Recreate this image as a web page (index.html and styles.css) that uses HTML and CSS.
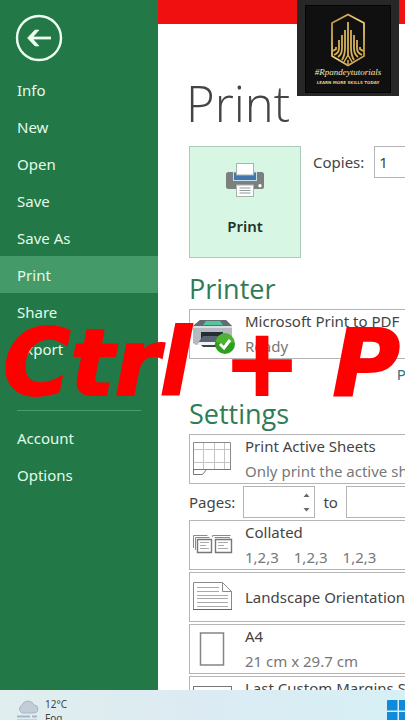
FILE: index.html
```html
<!DOCTYPE html>
<html lang="en">
<head>
    <meta charset="UTF-8">
    <meta name="viewport" content="width=device-width, initial-scale=1.0">
    <title>Print</title>
    <link rel="stylesheet" href="styles.css">
</head>
<body>
    <div class="backstage">
        <nav class="sidebar">
            <button class="back" aria-label="Back">
                <svg width="48" height="48" viewBox="0 0 48 48" fill="none" stroke="#eefff2">
                    <circle cx="24" cy="24" r="22" stroke-width="2.400"/>
                    <path d="M36 24H15" stroke-width="2.800"/>
                    <path d="M24 16h-4l-7.500 8 7.500 8h4l-7-8z" fill="#eefff2" stroke-width="0.600"/>
                </svg>
            </button>
            <a class="nav-item" href="#">Info</a>
            <a class="nav-item" href="#">New</a>
            <a class="nav-item" href="#">Open</a>
            <a class="nav-item" href="#">Save</a>
            <a class="nav-item" href="#">Save As</a>
            <a class="nav-item active" href="#">Print</a>
            <a class="nav-item" href="#">Share</a>
            <a class="nav-item" href="#">Export</a>
            <a class="nav-item" href="#">Close</a>
            <hr class="divider">
            <a class="nav-item" href="#">Account</a>
            <a class="nav-item" href="#">Options</a>
        </nav>

        <main class="content">
            <div class="title-bar"></div>
            <div class="panel">
                <h1>Print</h1>
                <div class="print-row">
                    <button class="print-btn">
                        <svg width="38" height="34" viewBox="0 0 38 34">
                            <rect x="0" y="9" width="38" height="17" rx="2.500" fill="#7b7f7d"/>
                            <rect x="7.500" y="9" width="23" height="8.500" fill="#4476ae" stroke="#c5e3ee"/>
                            <rect x="10.500" y="0.500" width="17" height="11.500" fill="#fff" stroke="#a5b4ac"/>
                            <rect x="10.500" y="22" width="17" height="11.500" fill="#fff" stroke="#a5b4ac"/>
                            <path d="M13.500 25h11M13.500 27.500h11M13.500 30h11" stroke="#8d9a9d"/>
                            <circle cx="34" cy="22.800" r="1.700" fill="#fff"/>
                        </svg>
                        <span>Print</span>
                    </button>
                    <label for="copies">Copies:</label>
                    <input class="copies" type="text" id="copies" value="1">
                </div>

                <h2>Printer</h2>
                <button class="option">
                    <svg class="option-icon" width="44" height="40" viewBox="0 0 44 40">
                        <path d="M9 6h26l6 6v17l-3 2H5l-3-2V12z" fill="#b4babf"/>
                        <path d="M9 6h26l6 6H2z" fill="#656b72"/>
                        <path d="M15 7h14l3 4H12z" fill="#51c79d"/>
                        <path d="M2 12h39v2H2z" fill="#d9dee1"/>
                        <path d="M10 18h22v10H10z" fill="#262d35"/>
                        <path d="M12 22h18v7H7z" fill="#596472"/>
                        <path d="M8 28h17l-2 3H6z" fill="#eff3f5"/>
                        <path d="M10 31h15v2H12z" fill="#3c4246"/>
                        <circle cx="34" cy="30" r="10" fill="#2f9f20"/>
                        <path d="M25 28a9 9 0 0 1 18 0q-9 4-18 0z" fill="#4fb233"/>
                        <path d="M29 30l4 4 6-8" fill="none" stroke="#fff" stroke-width="3"/>
                    </svg>
                    <span class="option-text">Microsoft Print to PDF<small>Ready</small></span>
                </button>
                <a class="properties" href="#">Printer Properties</a>

                <h2>Settings</h2>
                <div class="settings">
                    <button class="option">
                        <svg class="option-icon" width="44" height="40" viewBox="0 0 44 40" fill="none">
                            <path d="M2.500 3.500h37v27h-37z" stroke="#8a8a8a"/>
                            <path d="M12.500 4v26M23.500 4v26M33.500 4v26M3 10.500h36M3 23.500h36" stroke="#c4c4c4"/>
                            <path d="M2 30.500h38M2.500 30v5.500h9l4-5" stroke="#777"/>
                        </svg>
                        <span class="option-text">Print Active Sheets<small>Only print the active sheets</small></span>
                    </button>
                    <div class="pages">
                        <label for="from">Pages:</label>
                        <div class="spinner">
                            <input type="text" id="from">
                            <svg width="7" height="19" viewBox="0 0 7 19" fill="#666">
                                <path d="M0.500 4l3-3.500 3 3.500zM0.500 15l3 3.500 3-3.500z"/>
                            </svg>
                        </div>
                        <label for="to">to</label>
                        <div class="spinner">
                            <input type="text" id="to">
                            <svg width="7" height="19" viewBox="0 0 7 19" fill="#666">
                                <path d="M0.500 4l3-3.500 3 3.500zM0.500 15l3 3.500 3-3.500z"/>
                            </svg>
                        </div>
                    </div>
                    <button class="option">
                        <svg class="option-icon" width="44" height="40" viewBox="0 0 44 40" fill="none" stroke="#8a8a8a">
                            <path d="M2.500 23V10.500h14M4.500 25V12.500h14M21.500 12v-1.500h18M23.500 12.500h15v1"/>
                            <path d="M6.500 14.500h14v13h-14zM24.500 14.500h16v13h-16z" stroke="#777" stroke-width="1.400"/>
                            <path d="M9 17.500h9M9 20.500h6M9 23.500h9M27 17.500h10M27 20.500h6M27 23.500h10" stroke="#aaa"/>
                        </svg>
                        <span class="option-text">Collated<small class="sets"><span>1,2,3</span><span>1,2,3</span><span>1,2,3</span></small></span>
                    </button>
                    <button class="option">
                        <svg class="option-icon" width="44" height="40" viewBox="0 0 44 40" fill="none" stroke="#8a8a8a">
                            <path d="M2.500 5.500h29l9 9v18h-38z"/>
                            <path d="M31.500 5.500v9h9"/>
                            <path d="M2 32.500h39" stroke="#666"/>
                            <path d="M6 10.500h22M6 14.500h22M6 18.500h31M6 21.500h31M6 25.500h31M6 29.500h31" stroke="#aaa"/>
                        </svg>
                        <span class="option-text">Landscape Orientation</span>
                    </button>
                    <button class="option">
                        <svg class="option-icon" width="44" height="40" viewBox="0 0 44 40" fill="none">
                            <rect x="9.500" y="4" width="23" height="32" stroke="#858585" stroke-width="1.500"/>
                        </svg>
                        <span class="option-text">A4<small>21 cm x 29.7 cm</small></span>
                    </button>
                    <button class="option">
                        <svg class="option-icon" width="44" height="40" viewBox="0 0 44 40" fill="none">
                            <rect x="2.500" y="5.500" width="38" height="31" stroke="#777"/>
                        </svg>
                        <span class="option-text">Last Custom Margins Setting<small>Top: 1.91 cm Bottom: 1.91 cm</small></span>
                    </button>
                </div>
            </div>
        </main>
    </div>

    <footer class="taskbar">
        <svg width="22" height="24" viewBox="0 0 22 24">
            <path d="M5 13a4.500 4.500 0 0 1 0-8 6.500 6.500 0 0 1 12 0 4 4 0 0 1 0 8z" fill="#c3cdd8" stroke="#a9b5c6"/>
            <path d="M0 16.500h13M15 16.500h5M0 20.500h20" stroke="#a5b5cf" stroke-width="2"/>
        </svg>
        <div class="weather">12°C<br>Fog</div>
        <button class="start" aria-label="Start">
            <svg width="24" height="24" viewBox="0 0 24 24" fill="#108bdc">
                <path d="M0 1q0-1 1-1h9.500v10.500H0zM12 0h11q1 0 1 1v9.500H12zM0 12h10.500v12H1q-1 0-1-1zM12 12h12v11q0 1-1 1H12z"/>
            </svg>
        </button>
    </footer>

    <div class="brand">
        <div class="brand-card">
            <svg width="36" height="54" viewBox="0 0 36 54" fill="none" stroke="#d9b256">
                <defs>
                    <linearGradient id="gold" x1="0" y1="0" x2="1" y2="1">
                        <stop offset="0" stop-color="#b98a35"/>
                        <stop offset="0.500" stop-color="#f0d382"/>
                        <stop offset="1" stop-color="#bd8c34"/>
                    </linearGradient>
                </defs>
                <path d="M18 1.500L34 10v33L18 52.500 2 43V10z" stroke="url(#gold)" stroke-width="1.800"/>
                <path d="M18 9v35M15 17v18q0 7-3 12M21 17v18q0 7 3 12M12 22v13q0 6-4 9M24 22v13q0 6 4 9M9 27v8q0 5-5 7M27 27v8q0 5 5 7M6 34v2l-3 2M30 34v2l3 2" stroke-width="1.800"/>
                <path d="M18 42l-4 7M18 42l4 7M18 47v4" stroke-width="1.500"/>
            </svg>
            <div class="brand-name">#Rpandeytutorials</div>
            <div class="brand-tag">LEARN MORE SKILLS TODAY</div>
        </div>
    </div>

    <div class="shortcut">Ctrl + P</div>
</body>
</html>
```
FILE: styles.css
```css
* {
    margin: 0;
    padding: 0;
    box-sizing: border-box;
}

body {
    position: relative;
    display: flex;
    flex-direction: column;
    height: 100vh;
    overflow: hidden;
    font-family: "Noto Sans", "Open Sans", sans-serif;
    font-size: 15px;
    line-height: 20px;
    color: #444;
    background-color: #fff;
}

button, input {
    font: inherit;
    color: inherit;
    border: none;
    background: none;
}

button {
    cursor: pointer;
}

.backstage {
    display: flex;
    flex: 1;
    min-height: 0;
}

/* left menu */
.sidebar {
    flex: 0 0 158px;
    background-color: #227847;
}

.back {
    display: block;
    height: 71px;
    padding: 14px 15px 9px;
}

.back svg {
    display: block;
}

.nav-item {
    display: block;
    padding: 1px 0 0 17px;
    line-height: 36px;
    color: #e4fbea;
    text-decoration: none;
}

.nav-item.active {
    background-color: #459a69;
}

.divider {
    margin: 6px 17px 8px;
    border: none;
    border-top: 1px solid #4b9c6c;
}

/* print settings */
.content {
    flex: 1;
    min-width: 0;
    overflow: hidden;
}

.title-bar {
    height: 24px;
    background-color: #f01010;
}

.panel {
    width: 364px;
    padding: 47px 0 0 31px;
}

h1 {
    margin: 0 0 11px -3px;
    font-family: "Open Sans", "Noto Sans", sans-serif;
    font-size: 49px;
    font-weight: 300;
    line-height: 64px;
}

h2 {
    margin-bottom: 2px;
    font-family: "Open Sans", "Noto Sans", sans-serif;
    font-size: 27px;
    font-weight: 400;
    line-height: 36px;
    color: #2f7c56;
}

.print-row {
    display: flex;
    align-items: flex-start;
    gap: 12px;
    margin-bottom: 13px;
    line-height: 32px;
}

.print-btn {
    display: flex;
    flex-direction: column;
    align-items: center;
    gap: 19px;
    width: 112px;
    height: 112px;
    padding-top: 16px;
    border: 1px solid #a9cbb8;
    background-color: #d8f6e4;
    font-weight: 600;
    line-height: 20px;
    color: #1d3526;
}

.copies {
    width: 60px;
    height: 32px;
    margin-left: -2px;
    padding-left: 4px;
    border: 1px solid #b5b5b5;
}

.option {
    display: flex;
    align-items: center;
    gap: 10px;
    width: 100%;
    height: 50px;
    padding-left: 1px;
    border: 1px solid #b5b5b5;
    text-align: left;
    white-space: nowrap;
}

.option-text {
    line-height: 25px;
}

.option-text small {
    display: block;
    font-size: 15px;
    color: #777;
}

.option-text .sets {
    display: flex;
    gap: 15px;
}

.properties {
    display: block;
    margin: 5px 0 12px;
    text-align: right;
    color: #31708c;
    text-decoration: none;
}

.settings {
    display: flex;
    flex-direction: column;
    gap: 2px;
}

.pages {
    display: flex;
    align-items: center;
    gap: 8px;
    height: 32px;
}

.spinner {
    display: flex;
    align-items: center;
    width: 72px;
    height: 32px;
    padding-right: 4px;
    border: 1px solid #b5b5b5;
}

.spinner input {
    flex: 1;
    min-width: 0;
}

/* bottom bar */
.taskbar {
    display: flex;
    flex: 0 0 30px;
    align-items: flex-start;
    gap: 6px;
    padding: 7px 0 0 17px;
    overflow: hidden;
    background: linear-gradient(to right, #e0eeee, #dcebf3 50%, #d6f0f5);
}

.taskbar svg {
    display: block;
    margin-top: 3px;
}

.weather {
    flex: 1;
    font-size: 10px;
    line-height: 14px;
}

.start {
    margin-right: -6px;
}

/* channel logo */
.brand {
    position: absolute;
    top: 0;
    right: 6px;
    padding: 5px 8px 3px;
    background-color: #272727;
}

.brand-card {
    width: 86px;
    padding: 7px 0 5px;
    border: 1px solid #050505;
    background-color: #101010;
    text-align: center;
    white-space: nowrap;
}

.brand svg {
    display: block;
    margin: 0 auto;
}

.brand-name {
    font-family: "Liberation Serif", serif;
    font-size: 9px;
    font-style: italic;
    line-height: 11px;
    color: #f5e9ba;
}

.brand-tag {
    font-family: "DejaVu Sans", sans-serif;
    font-size: 4px;
    font-weight: 700;
    line-height: 9px;
    color: #e6c676;
}

/* shortcut caption over the page */
.shortcut {
    position: absolute;
    top: 311px;
    left: 3px;
    font-family: "DejaVu Sans", sans-serif;
    font-size: 92px;
    font-style: italic;
    font-weight: 700;
    line-height: 106px;
    color: #f00;
    white-space: nowrap;
    pointer-events: none;
    -webkit-text-stroke: 2px #f00;
}
```
